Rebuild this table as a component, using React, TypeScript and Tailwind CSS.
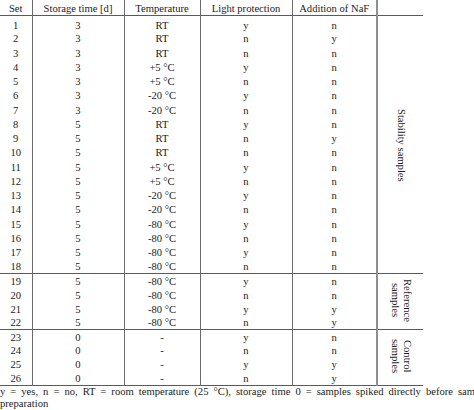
type Row = [number, number, string, string, string];

const groupA: Row[] = [
  [1, 3, "RT", "y", "n"],
  [2, 3, "RT", "n", "y"],
  [3, 3, "RT", "n", "n"],
  [4, 3, "+5 °C", "y", "n"],
  [5, 3, "+5 °C", "n", "n"],
  [6, 3, "-20 °C", "y", "n"],
  [7, 3, "-20 °C", "n", "n"],
  [8, 5, "RT", "y", "n"],
  [9, 5, "RT", "n", "y"],
  [10, 5, "RT", "n", "n"],
  [11, 5, "+5 °C", "y", "n"],
  [12, 5, "+5 °C", "n", "n"],
  [13, 5, "-20 °C", "y", "n"],
  [14, 5, "-20 °C", "n", "n"],
  [15, 5, "-80 °C", "y", "n"],
  [16, 5, "-80 °C", "n", "n"],
  [17, 5, "-80 °C", "y", "n"],
  [18, 5, "-80 °C", "n", "n"],
];

const groupB: Row[] = [
  [19, 5, "-80 °C", "y", "n"],
  [20, 5, "-80 °C", "n", "n"],
  [21, 5, "-80 °C", "y", "y"],
  [22, 5, "-80 °C", "n", "y"],
];

const groupC: Row[] = [
  [23, 0, "-", "y", "n"],
  [24, 0, "-", "n", "n"],
  [25, 0, "-", "y", "y"],
  [26, 0, "-", "n", "y"],
];

const cell = "px-0 pb-0 pt-[2px] align-middle text-center border-r border-[#6b6b6b]";
const lastCell = "px-0 pb-0 pt-[2px] align-middle text-center border-r-2 border-[#8f8f8f]";

function Group({
  rows,
  label,
  rowClass,
  firstClass,
}: {
  rows: Row[];
  label: React.ReactNode;
  rowClass: string;
  firstClass?: string;
}) {
  return (
    <tbody className="border-b border-[#5a5a5a]">
      {rows.map((r, i) => (
        <tr key={r[0]} className={i === 0 && firstClass ? firstClass : rowClass}>
          <td className={cell}>{r[0]}</td>
          <td className={cell}>{r[1]}</td>
          <td className={cell}>{r[2]}</td>
          <td className={cell}>{r[3]}</td>
          <td className={lastCell}>{r[4]}</td>
          {i === 0 && (
            <td rowSpan={rows.length} className="p-0 align-middle text-center">
              <div className="inline-block [writing-mode:vertical-rl] leading-[12px] text-center">
                {label}
              </div>
            </td>
          )}
        </tr>
      ))}
    </tbody>
  );
}

export default function App() {
  return (
    <div className="w-[474px] h-[410px] overflow-hidden bg-white text-[#1c1c1c] font-['Liberation_Serif',serif] text-[10.6px] leading-none">
      <table className="table-fixed border-collapse w-[423px]">
        <colgroup>
          <col className="w-[32px]" />
          <col className="w-[92px]" />
          <col className="w-[76px]" />
          <col className="w-[92px]" />
          <col className="w-[85px]" />
          <col className="w-[46px]" />
        </colgroup>
        <thead className="border-b border-[#5a5a5a]">
          <tr className="h-[15px]">
            <th className={cell + " font-normal !pt-[4px]"}>Set</th>
            <th className={cell + " font-normal !pt-[4px]"}>Storage time [d]</th>
            <th className={cell + " font-normal !pt-[4px]"}>Temperature</th>
            <th className={cell + " font-normal !pt-[4px]"}>Light protection</th>
            <th className={lastCell + " font-normal !pt-[4px]"}>Addition of NaF</th>
            <th className="p-0" />
          </tr>
        </thead>
        <Group
          rows={groupA}
          label="Stability samples"
          rowClass="h-[14.25px]"
          firstClass="h-[16.5px] [&>td]:pt-[4.5px]"
        />
        <Group
          rows={groupB}
          label={
            <>
              Reference
              <br />
              samples
            </>
          }
          rowClass="h-[14px]"
        />
        <Group
          rows={groupC}
          label={
            <>
              Control
              <br />
              samples
            </>
          }
          rowClass="h-[13.8px]"
        />
      </table>
      <p className="w-[488px] text-justify leading-[12.5px]">
        <span className="block [text-align-last:justify]">
          y = yes, n = no, RT = room temperature (25 °C), storage time 0 = samples spiked directly
          before sample
        </span>
        <span className="block">preparation</span>
      </p>
    </div>
  );
}
